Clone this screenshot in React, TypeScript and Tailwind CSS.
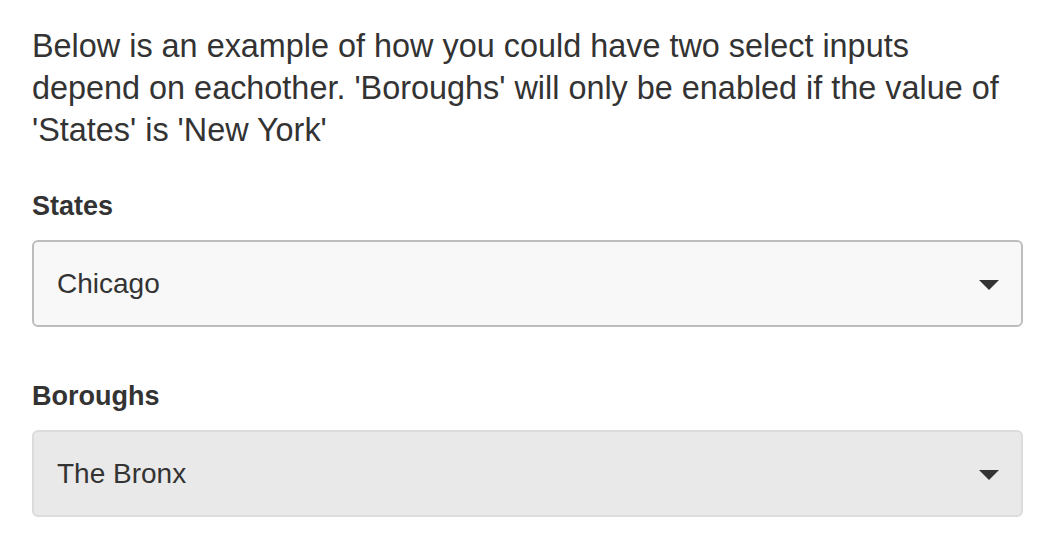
import { useState } from "react";

const states = ["Chicago", "New York", "California", "Texas"];
const boroughs = ["The Bronx", "Brooklyn", "Manhattan", "Queens", "Staten Island"];

function Caret() {
  return (
    <svg width="20" height="10" viewBox="0 0 20 10" aria-hidden="true" className="pointer-events-none absolute right-[24px] top-[40px]">
      <path d="M0 0 L20 0 L10 10 Z" fill="#333" />
    </svg>
  );
}

export default function App() {
  const [state, setState] = useState("Chicago");
  const [borough, setBorough] = useState("The Bronx");
  const disabled = state !== "New York";

  return (
    <div className="min-h-screen bg-white font-['Liberation_Sans',Arial,sans-serif] text-[#333]">
      <div className="px-[32px] pt-[25px] pr-[25px]">
        <p className="w-[978px] text-[32.4px] leading-[42px]">
          Below is an example of how you could have two select inputs depend on eachother. 'Boroughs' will only be
          enabled if the value of 'States' is 'New York'
        </p>

        <label className="mt-[34px] block text-[27px] font-semibold leading-[42px]">States</label>
        <div className="relative mt-[13px]">
          <select
            value={state}
            onChange={(e) => setState(e.target.value)}
            className="h-[87px] w-full appearance-none rounded-[6px] border-2 border-[#bdbdbd] bg-[#f8f8f8] pl-[23px] text-[28px] text-[#333] outline-none"
          >
            {states.map((s) => (
              <option key={s}>{s}</option>
            ))}
          </select>
          <Caret />
        </div>

        <label className="mt-[48px] block text-[27px] font-semibold leading-[42px]">Boroughs</label>
        <div className="relative mt-[13px]">
          <select
            value={borough}
            disabled={disabled}
            onChange={(e) => setBorough(e.target.value)}
            className="h-[87px] w-full appearance-none rounded-[6px] border-2 border-[#dcdcdc] bg-[#e9e9e9] pl-[23px] text-[28px] text-[#333] opacity-100 outline-none"
          >
            {boroughs.map((b) => (
              <option key={b}>{b}</option>
            ))}
          </select>
          <Caret />
        </div>
      </div>
    </div>
  );
}
